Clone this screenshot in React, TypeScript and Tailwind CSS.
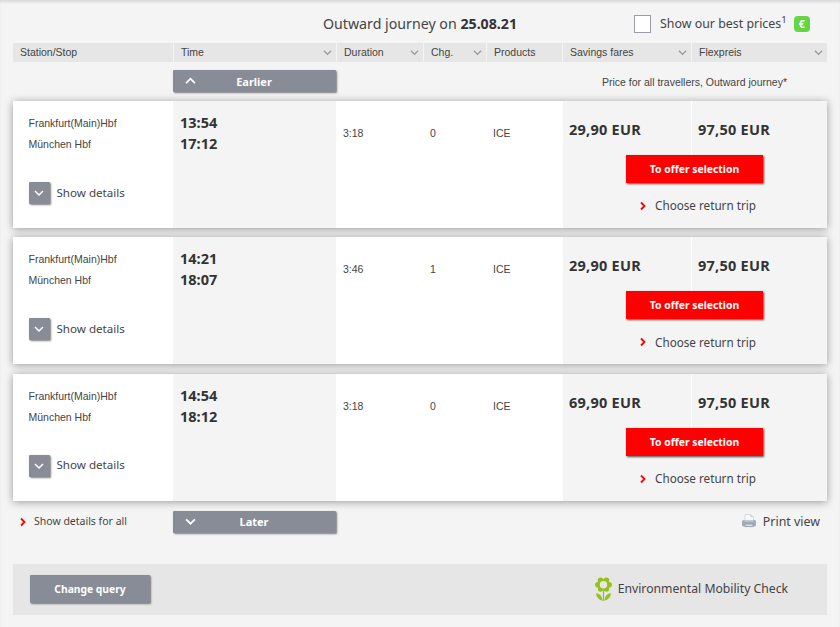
import clsx from "clsx";

interface Connection {
  from: string;
  to: string;
  departure: string;
  arrival: string;
  duration: string;
  changes: number;
  products: string;
  savingsFare: string;
  flexpreis: string;
}

const connections: Connection[] = [
  { from: "Frankfurt(Main)Hbf", to: "München Hbf", departure: "13:54", arrival: "17:12", duration: "3:18", changes: 0, products: "ICE", savingsFare: "29,90 EUR", flexpreis: "97,50 EUR" },
  { from: "Frankfurt(Main)Hbf", to: "München Hbf", departure: "14:21", arrival: "18:07", duration: "3:46", changes: 1, products: "ICE", savingsFare: "29,90 EUR", flexpreis: "97,50 EUR" },
  { from: "Frankfurt(Main)Hbf", to: "München Hbf", departure: "14:54", arrival: "18:12", duration: "3:18", changes: 0, products: "ICE", savingsFare: "69,90 EUR", flexpreis: "97,50 EUR" },
];

const columns = [
  { label: "Station/Stop", width: "w-[160px]", sortable: false },
  { label: "Time", width: "w-[162px]", sortable: true },
  { label: "Duration", width: "w-[86px]", sortable: true },
  { label: "Chg.", width: "w-[62px]", sortable: true },
  { label: "Products", width: "w-[75px]", sortable: false },
  { label: "Savings fares", width: "w-[128px]", sortable: true },
  { label: "Flexpreis", width: "flex-1", sortable: true },
];

const head = "font-['Noto_Sans',sans-serif]";

interface ChevronProps {
  direction: "up" | "down" | "right";
  className?: string;
}

function Chevron({ direction, className }: ChevronProps) {
  const points = {
    up: "1,6.5 5,2.5 9,6.5",
    down: "1,3 5,7 9,3",
    right: "3,1.5 6.5,5 3,8.5",
  };
  return (
    <svg viewBox="0 0 10 10" fill="none" stroke="currentColor" className={clsx("shrink-0", className)}>
      <polyline points={points[direction]} />
    </svg>
  );
}

function FlowerIcon() {
  return (
    <svg viewBox="0 0 17 24" className="w-[17px] h-6 shrink-0" fill="#94c11c">
      <circle cx="5.6" cy="3.2" r="2.8" />
      <circle cx="11.4" cy="3.2" r="2.8" />
      <circle cx="2.9" cy="7.8" r="2.8" />
      <circle cx="14.1" cy="7.8" r="2.8" />
      <circle cx="5.6" cy="12" r="2.8" />
      <circle cx="11.4" cy="12" r="2.8" />
      <circle cx="8.5" cy="8" r="5.8" />
      <circle cx="8.5" cy="7.8" r="3.7" fill="#e6e6e6" />
      <path d="M7.9 14h1.2v9.8H7.9z" />
      <path d="M1 16.2c4.2.6 6.2 3.2 6.6 7.5C3.6 22.6 1.3 20.2 1 16.2zM16 16.2c-4.2.6-6.2 3.2-6.6 7.5 4-1.1 6.3-3.5 6.6-7.5z" />
    </svg>
  );
}

function PrinterIcon() {
  return (
    <svg viewBox="0 0 14 14" className="w-3.5 h-3.5 shrink-0 mb-0.5">
      <path d="M3 7V.5h6L11.5 3v4z" fill="#f8f8f8" stroke="#c9ced4" strokeWidth=".7" />
      <path d="M8.5.5V3h3z" fill="#c9ced4" />
      <rect x="0" y="6" width="14" height="6.5" rx="1.6" fill="#a2acb8" />
      <path d="M2.5 6h9v1.6h-9z" fill="#c4cad1" />
      <path d="M3 10h8v2.6H3z" fill="#d9dde1" stroke="#8f9aa7" strokeWidth=".8" />
    </svg>
  );
}

function TableHeader() {
  return (
    <div className="flex gap-px h-[19px]">
      {columns.map((col) => (
        <div key={col.label} className={clsx("flex items-center justify-between bg-[#e6e6e6] pl-[7px] pr-1", col.width)}>
          <span>{col.label}</span>
          {col.sortable && <Chevron direction="down" className="w-[9px] h-[9px] text-[#9a9ca2] stroke-[1.4]" />}
        </div>
      ))}
    </div>
  );
}

function ScrollButton({ label, direction }: { label: string; direction: "up" | "down" }) {
  return (
    <button className="flex items-center w-[163px] h-[22px] pl-3 rounded-[1px] bg-[#878c96] text-white shadow-[1px_1px_2px_rgba(0,0,0,0.5)]">
      <Chevron direction={direction} className="w-[11px] h-[11px] stroke-[1.6]" />
      <span className={clsx("flex-1 pt-0.5 pr-[24px] text-center text-[11px] font-bold", head)}>{label}</span>
    </button>
  );
}

function ConnectionCard({ connection }: { connection: Connection }) {
  return (
    <div className="flex h-[127px] bg-white shadow-[0_1px_8px_rgba(0,0,0,0.38)]">
      <div className="w-[160px] pl-[15.5px] pt-3">
        <p className="leading-[21px]">{connection.from}</p>
        <p className="leading-[21px]">{connection.to}</p>
        <button className="flex items-center gap-[7px] mt-[27px]">
          <span className="flex items-center justify-center w-[21px] h-[22px] rounded-[1px] bg-[#878c96] text-white shadow-[1px_1px_2px_rgba(0,0,0,0.5)]">
            <Chevron direction="down" className="w-[10px] h-[10px] stroke-[1.5]" />
          </span>
          <span className={clsx("pb-px text-[11.6px]", head)}>Show details</span>
        </button>
      </div>
      <div className={clsx("w-[163px] pl-[7px] pt-[11px] bg-[#f4f4f4] text-[14.5px] font-bold text-[#333]", head)}>
        <p className="leading-[21px]">{connection.departure}</p>
        <p className="leading-[21px]">{connection.arrival}</p>
      </div>
      <div className="w-[88px] pl-[7px] pt-[22px] leading-[21px]">{connection.duration}</div>
      <div className="w-[62px] pl-[6px] pt-[22px] leading-[21px]">{connection.changes}</div>
      <div className="w-[77px] pl-[7px] pt-[22px] leading-[21px]">{connection.products}</div>
      <div className="flex-1 bg-[#f4f4f4]">
        <div className={clsx("flex h-[54px] text-[14.5px] tracking-[0.25px] font-bold text-[#333] leading-[21px]", head)}>
          <p className="w-[129px] pl-1.5 pt-[18px] border-r border-white">{connection.savingsFare}</p>
          <p className="pl-1.5 pt-[18px]">{connection.flexpreis}</p>
        </div>
        <div className="flex flex-col items-center pr-px">
          <button className={clsx("w-[137px] h-[28px] pt-0.5 bg-[#ff0000] text-white text-[10.4px] font-bold shadow-[1px_1px_2px_rgba(0,0,0,0.7)]", head)}>
            To offer selection
          </button>
          <a href="#" className={clsx("flex items-center gap-[7px] ml-[5px] mt-[13px] h-[20px] text-[11.7px]", head)}>
            <Chevron direction="right" className="w-[10px] h-[10px] text-[#ff0000] stroke-[1.8]" />
            Choose return trip
          </a>
        </div>
      </div>
    </div>
  );
}

export default function App() {
  return (
    <div className="h-[627px] w-[840px] overflow-hidden bg-[#f4f4f4] px-[13px] font-['Liberation_Sans',Arial,sans-serif] text-[10.5px] text-[#444] whitespace-nowrap shadow-[inset_0_3px_3px_-1px_#d8d8d8]">
      {/* Title row */}
      <div className={clsx("flex items-center h-[43px] pt-[5px] pl-[310px]", head)}>
        <h1 className="w-[311px] pb-px text-[14.2px]">
          Outward journey on <b className="text-[#333]">25.08.21</b>
        </h1>
        <span className="w-[17px] h-[18px] border border-[#9a9da8] bg-white" />
        <span className="ml-[9px] text-[12.4px]">
          Show our best prices<sup className="text-[9.5px]">1</sup>
        </span>
        <span className="ml-[7px] flex items-center justify-center w-4 h-4 rounded-[4px] bg-[#64d643] text-white text-[11px] font-bold">€</span>
      </div>

      <TableHeader />

      <div className="flex items-center justify-between h-[39px] pl-[160px] pr-[40px] pb-px">
        <ScrollButton label="Earlier" direction="up" />
        <span className="pt-[3px]">Price for all travellers, Outward journey*</span>
      </div>

      {/* Connections */}
      <div className="flex flex-col gap-[9.3px]">
        {connections.map((connection) => (
          <ConnectionCard key={connection.departure} connection={connection} />
        ))}
      </div>

      <div className={clsx("flex items-center h-[42px] pl-[5px] pr-[7px]", head)}>
        <a href="#" className="flex items-center gap-[6px] w-[155px] text-[10.5px]">
          <Chevron direction="right" className="w-[10px] h-[10px] text-[#ff0000] stroke-[1.8]" />
          Show details for all
        </a>
        <ScrollButton label="Later" direction="down" />
        <a href="#" className="ml-auto flex items-center gap-[7px] pt-px text-[12.4px]">
          <PrinterIcon />
          Print view
        </a>
      </div>

      {/* Footer */}
      <div className={clsx("flex items-center justify-between h-[51px] mt-[21.4px] pl-[17px] pr-[39px] bg-[#e6e6e6]", head)}>
        <button className="w-[120px] h-[28px] rounded-[1px] bg-[#878c96] text-white text-[10.3px] font-bold shadow-[1px_1px_2px_rgba(0,0,0,0.5)]">
          Change query
        </button>
        <a href="#" className="flex items-center gap-1.5 pb-px text-[12.2px]">
          <FlowerIcon />
          Environmental Mobility Check
        </a>
      </div>
    </div>
  );
}
